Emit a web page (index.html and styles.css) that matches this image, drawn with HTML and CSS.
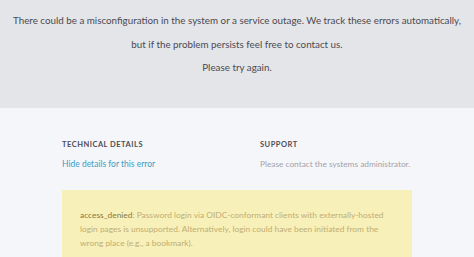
FILE: index.html
```html
<!DOCTYPE html>
<html>
<head>
<meta charset="utf-8">
<link rel="stylesheet" href="styles.css">
</head>
<body>
<header class="banner">
  <p class="msg">There could be a misconfiguration in the system or a service outage. We track these errors automatically,</p>
  <p class="msg">but if the problem persists feel free to contact us.</p>
  <p class="msg">Please try again.</p>
</header>
<main class="content">
  <div class="cols">
    <section class="col">
      <h3 class="label">Technical details</h3>
      <a class="link" href="#">Hide details for this error</a>
    </section>
    <section class="col">
      <h3 class="label">Support</h3>
      <p class="muted">Please contact the systems administrator.</p>
    </section>
  </div>
  <div class="notice">
    <p><strong>access_denied</strong>: Password login via OIDC-conformant clients with externally-hosted login pages is unsupported. Alternatively, login could have been initiated from the wrong place (e.g., a bookmark).</p>
  </div>
</main>
</body>
</html>
```
FILE: styles.css
```css
html, body {
  margin: 0;
  padding: 0;
}
body {
  width: 474px;
  height: 257px;
  overflow: hidden;
  background: #f5f6f9;
  font-family: Lato, "Open Sans", sans-serif;
}
.banner {
  background: #e4e5e8;
  height: 108px;
  box-sizing: border-box;
  padding-top: 14px;
  text-align: center;
}
.msg {
  margin: 0 0 10px;
  font-size: 9.8px;
  line-height: 13.5px;
  color: #4a4a52;
}
.content {
  width: 350px;
  margin: 0 auto;
  padding-top: 32px;
}
.cols {
  display: grid;
  grid-template-columns: 152px 152px;
  column-gap: 46px;
}
.label {
  margin: 0 0 8px;
  font-size: 7.5px;
  font-weight: 700;
  letter-spacing: 0.5px;
  text-transform: uppercase;
  color: #4d4d55;
  line-height: 10px;
}
.link {
  display: block;
  font-size: 8.5px;
  color: #3d9cc4;
  text-decoration: none;
  line-height: 12px;
}
.muted {
  margin: 0;
  font-size: 8.3px;
  color: #a2a3ab;
  line-height: 12px;
  white-space: nowrap;
}
.notice {
  margin-top: 20px;
  background: #f8f0b9;
  padding: 18px 18px 16px;
}
.notice p {
  margin: 0;
  font-size: 8.4px;
  line-height: 14px;
  color: #c0ae72;
}
.notice strong {
  font-weight: 400;
  color: #86783f;
}
```
